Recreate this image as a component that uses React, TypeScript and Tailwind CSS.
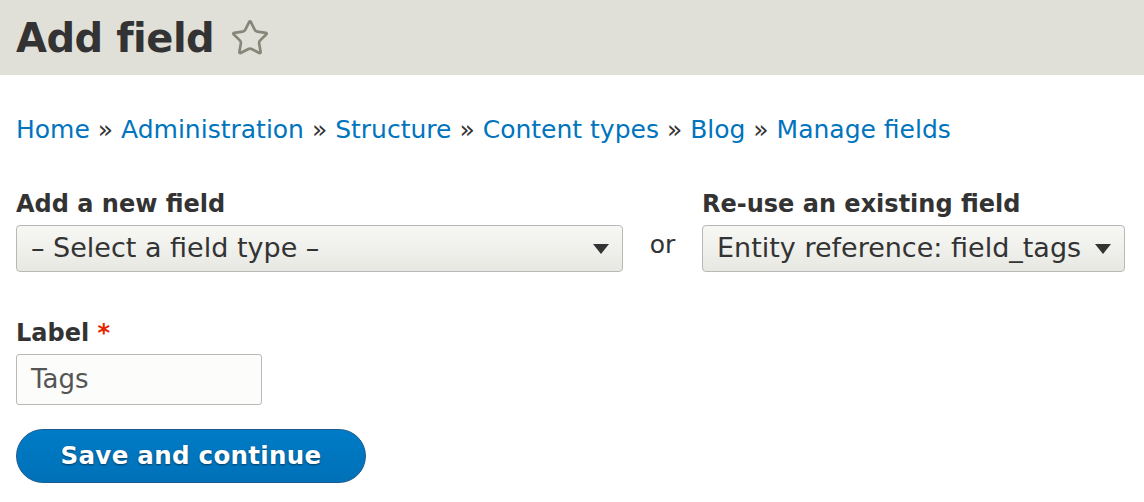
import { Star } from 'lucide-react';

const font = { fontFamily: '"DejaVu Sans", Verdana, sans-serif' };

function Caret() {
  return (
    <svg width="18" height="12" viewBox="0 0 18 12" className="shrink-0">
      <path d="M1 1 L17 1 L9 11 Z" fill="#333" />
    </svg>
  );
}

export default function App() {
  return (
    <div className="w-[1144px] h-[502px] bg-white text-[#333] overflow-hidden" style={font}>
      <div className="h-[75px] bg-[#e0e0d8] flex items-center pl-[16px]">
        <h1 className="text-[40px] font-bold leading-none text-[#333] tracking-[-0.5px]">Add field</h1>
        <Star className="ml-[16px] w-[40px] h-[40px] text-[#868679]" strokeWidth={1.6} />
      </div>

      <div className="px-[16px] pt-[41px]">
        <nav className="text-[25px] leading-[28px] text-[#0074bd]">
          <a>Home</a> <span className="text-[#333]">»</span> <a>Administration</a>{' '}
          <span className="text-[#333]">»</span> <a>Structure</a> <span className="text-[#333]">»</span>{' '}
          <a>Content types</a> <span className="text-[#333]">»</span> <a>Blog</a>{' '}
          <span className="text-[#333]">»</span> <a>Manage fields</a>
        </nav>

        <div className="flex items-end mt-[46px]">
          <div className="flex flex-col">
            <label className="text-[24px] font-bold leading-[28px] mb-[7px]">Add a new field</label>
            <div className="w-[607px] h-[47px] rounded-[4px] border border-[#b8b8b8] bg-gradient-to-b from-[#f7f7f4] to-[#e8e8e3] flex items-center justify-between pl-[14px] pr-[12px] text-[27px]">
              <span>– Select a field type –</span>
              <Caret />
            </div>
          </div>
          <div className="w-[79px] h-[47px] flex items-center justify-center text-[25px] pb-[8px]">or</div>
          <div className="flex flex-col">
            <label className="text-[24px] font-bold leading-[28px] mb-[7px]">Re-use an existing field</label>
            <div className="w-[423px] h-[47px] rounded-[4px] border border-[#b8b8b8] bg-gradient-to-b from-[#f7f7f4] to-[#e8e8e3] flex items-center justify-between pl-[14px] pr-[12px] text-[27px]">
              <span>Entity reference: field_tags</span>
              <Caret />
            </div>
          </div>
        </div>

        <div className="mt-[47px]">
          <label className="text-[24px] font-bold leading-[28px]">
            Label <span className="text-[#e62600]">*</span>
          </label>
          <div className="mt-[6px] w-[246px] h-[51px] rounded-[3px] border border-[#b8b8b8] bg-[#fcfcfa] flex items-center pl-[14px] text-[26px] text-[#555]">
            Tags
          </div>
        </div>

        <button className="mt-[24px] w-[350px] h-[54px] rounded-full bg-gradient-to-b from-[#007bc6] to-[#0071b8] border border-[#1e5c90] text-white text-[24.5px] font-bold tracking-[0.3px] [text-shadow:0_1px_2px_rgba(0,0,0,0.5)]">
          Save and continue
        </button>
      </div>
    </div>
  );
}
